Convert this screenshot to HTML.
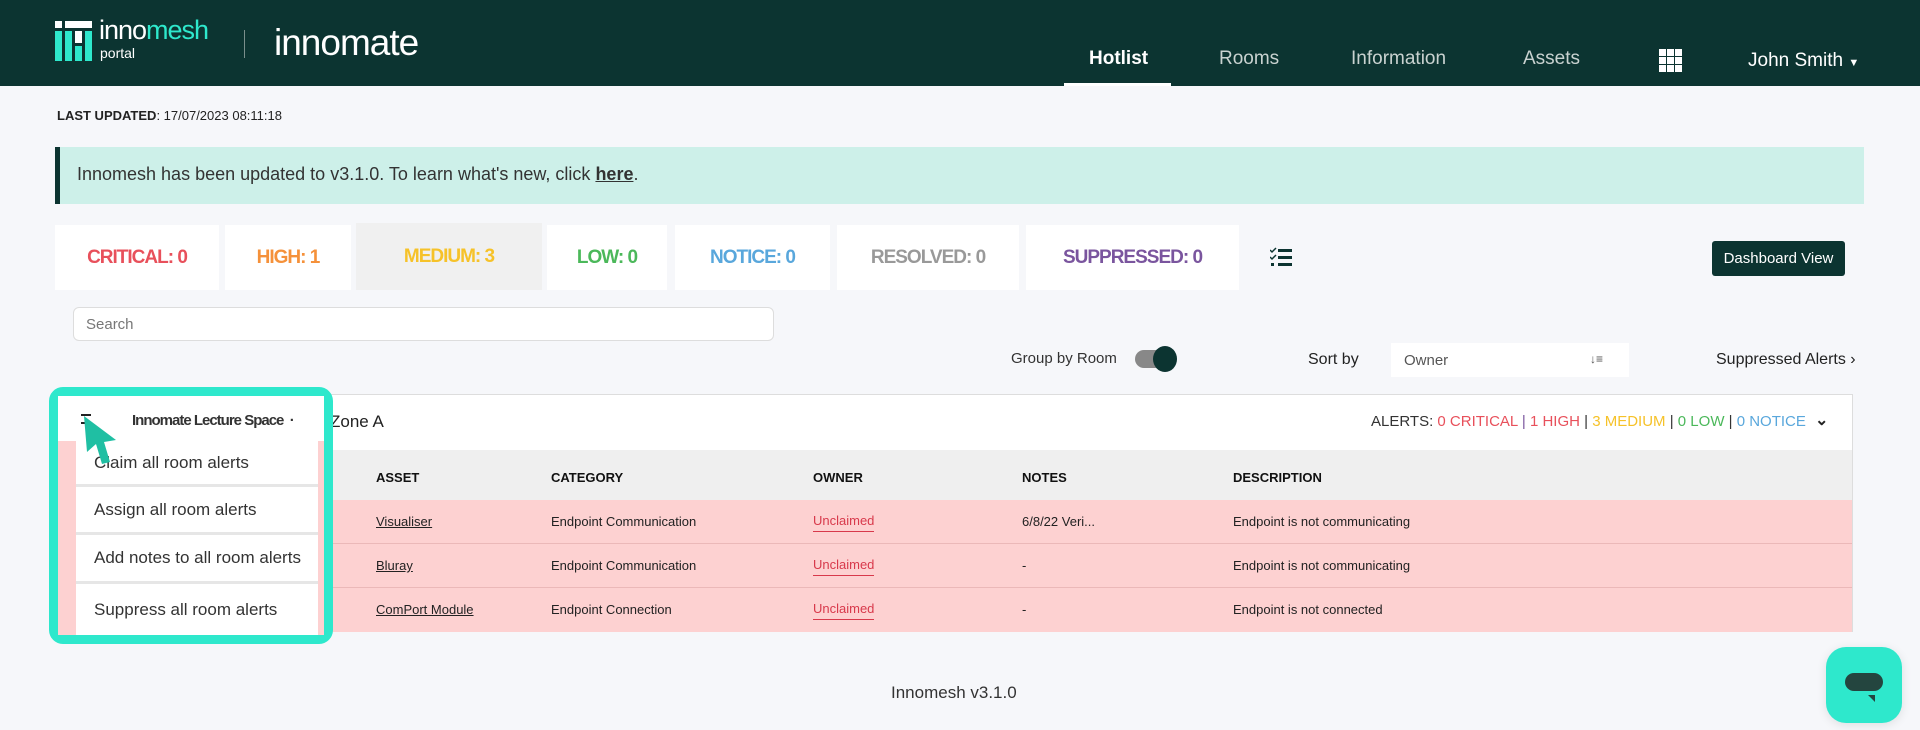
<!DOCTYPE html>
<html><head><meta charset="utf-8"><style>
*{box-sizing:border-box;margin:0;padding:0}
body{width:1920px;height:730px;overflow:hidden;background:#f6f7fa;font-family:"Liberation Sans Narrow","Liberation Sans",sans-serif;color:#222;position:relative}
.a{position:absolute}
.hdr{left:0;top:0;width:1920px;height:86px;background:#0c3431}
.nav{top:48px;font-size:19px;color:#c9d2d0}
.card{top:225px;height:65px;background:#fff;display:flex;align-items:center;justify-content:center;font-family:"Liberation Sans",sans-serif;font-weight:bold;font-size:19px;letter-spacing:-1px}
.th{top:470px;font-size:13px;font-weight:bold;color:#111}
.td{font-size:13px;color:#222}
.u{text-decoration:underline}
.un{color:#d8394b;border-bottom:1px solid #d8394b;padding-bottom:3px}
.mi{left:76px;width:242px;background:#fff;border-bottom:3px solid #e6e6e6;font-size:17px;color:#333;padding-left:18px;display:flex;align-items:center}
</style></head><body>
<div class="a hdr"></div>
<svg class="a" style="left:55px;top:21px" width="37" height="40" viewBox="0 0 37 40"><rect x="0" y="0" width="7" height="7" fill="#fff"/><rect x="0" y="10" width="7" height="30" fill="#2ee8cc"/><rect x="10" y="0" width="27" height="7" fill="#fff"/><rect x="10" y="10" width="7" height="30" fill="#2ee8cc"/><rect x="20" y="10" width="7" height="12" fill="#fff"/><rect x="20" y="25" width="7" height="15" fill="#2ee8cc"/><rect x="30" y="10" width="7" height="30" fill="#2ee8cc"/></svg>
<div class="a" style="left:99px;top:15px;font-family:'Liberation Sans',sans-serif;font-size:27px;color:#fff;letter-spacing:-1px">inno<span style="color:#2ee8cc">mesh</span></div>
<div class="a" style="left:100px;top:45px;font-family:'Liberation Sans',sans-serif;font-size:14px;color:#fff">portal</div>
<div class="a" style="left:244px;top:30px;width:1px;height:28px;background:#7a8f8c"></div>
<div class="a" style="left:274px;top:22px;font-family:'Liberation Sans',sans-serif;font-size:37px;color:#fff;letter-spacing:-1px">innomate</div>
<div class="a nav" style="left:1089px;color:#fff;font-weight:bold">Hotlist</div>
<div class="a" style="left:1064px;top:83px;width:107px;height:3px;background:#fff"></div>
<div class="a nav" style="left:1219px">Rooms</div>
<div class="a nav" style="left:1351px">Information</div>
<div class="a nav" style="left:1523px">Assets</div>
<svg class="a" style="left:1659px;top:49px" width="24" height="24"><g fill="#fff"><rect x="0" y="0" width="7" height="7"/><rect x="8" y="0" width="7" height="7"/><rect x="16" y="0" width="7" height="7"/><rect x="0" y="8" width="7" height="7"/><rect x="8" y="8" width="7" height="7"/><rect x="16" y="8" width="7" height="7"/><rect x="0" y="16" width="7" height="7"/><rect x="8" y="16" width="7" height="7"/><rect x="16" y="16" width="7" height="7"/></g></svg>
<div class="a nav" style="left:1748px;top:50px;color:#fff">John Smith <span style="font-size:11px">▼</span></div>
<div class="a" style="left:57px;top:108px;font-size:13px"><b>LAST UPDATED</b>: 17/07/2023 08:11:18</div>
<div class="a" style="left:55px;top:147px;width:1809px;height:57px;background:#cdf0e9;border-left:5px solid #0c3431"></div>
<div class="a" style="left:77px;top:164px;font-size:18px;color:#333;font-family:'Liberation Sans',sans-serif">Innomesh has been updated to v3.1.0. To learn what's new, click <b class="u">here</b>.</div>
<div class="a card" style="left:55px;width:164px;color:#e8505b">CRITICAL: 0</div>
<div class="a card" style="left:225px;width:126px;color:#f5913a">HIGH: 1</div>
<div class="a card" style="left:356px;width:186px;background:#f0f0f0;color:#f6c229;top:223px;height:67px">MEDIUM: 3</div>
<div class="a card" style="left:547px;width:120px;color:#4bb85a">LOW: 0</div>
<div class="a card" style="left:675px;width:155px;color:#59a7dc">NOTICE: 0</div>
<div class="a card" style="left:837px;width:182px;color:#999">RESOLVED: 0</div>
<div class="a card" style="left:1026px;width:213px;color:#7a559e">SUPPRESSED: 0</div>
<svg class="a" style="left:1270px;top:247px" width="22" height="20"><g fill="#0c3431"><rect x="8" y="2" width="14" height="3"/><rect x="8" y="9" width="14" height="3"/><rect x="8" y="16" width="14" height="3"/><rect x="1" y="16" width="3" height="3"/></g><path d="M0 3l2 2 4-4M0 10l2 2 4-4" stroke="#0c3431" stroke-width="1.5" fill="none"/></svg>
<div class="a" style="left:1712px;top:241px;width:133px;height:35px;background:#0c3431;border-radius:3px;color:#fff;font-size:15px;display:flex;align-items:center;justify-content:center">Dashboard View</div>
<div class="a" style="left:73px;top:307px;width:701px;height:34px;background:#fff;border:1px solid #ddd;border-radius:6px;font-size:15px;color:#777;padding:8px 12px">Search</div>
<div class="a" style="left:1011px;top:350px;font-size:15px;color:#333">Group by Room</div>
<div class="a" style="left:1135px;top:350px;width:36px;height:18px;background:#888;border-radius:9px"></div>
<div class="a" style="left:1153px;top:346px;width:24px;height:26px;background:#0c3431;border-radius:50%"></div>
<div class="a" style="left:1308px;top:351px;font-size:16px;color:#222">Sort by</div>
<div class="a" style="left:1391px;top:343px;width:238px;height:34px;background:#fff;font-size:15px;color:#555;padding:9px 13px">Owner<span style="position:absolute;right:26px;font-size:12px">↓≡</span></div>
<div class="a" style="left:1716px;top:351px;font-size:16px;color:#222">Suppressed Alerts ›</div>
<div class="a" style="left:55px;top:394px;width:1798px;height:238px;background:#fff;border:1px solid #ddd"></div>
<div class="a" style="left:56px;top:450px;width:1796px;height:50px;background:#efefef"></div>
<div class="a" style="left:56px;top:500px;width:1796px;height:132px;background:#fdd1d1"></div>
<div class="a" style="left:56px;top:543px;width:1796px;height:1px;background:#ebb8b8"></div>
<div class="a" style="left:56px;top:587px;width:1796px;height:1px;background:#ebb8b8"></div>
<div class="a" style="left:1371px;top:413px;font-size:15px;color:#333">ALERTS: <span style="color:#e8505b">0 CRITICAL</span> <span style="color:#7a559e">|</span> <span style="color:#e8505b">1 HIGH</span> | <span style="color:#f6c229">3 MEDIUM</span> | <span style="color:#4bb85a">0 LOW</span> | <span style="color:#59a7dc">0 NOTICE</span></div>
<div class="a" style="left:1815px;top:410px;font-size:16px;font-weight:bold">⌄</div>
<div class="a" style="left:330px;top:412px;font-size:17px;color:#222">Zone A</div>
<div class="a th" style="left:376px">ASSET</div><div class="a th" style="left:551px">CATEGORY</div><div class="a th" style="left:813px">OWNER</div><div class="a th" style="left:1022px">NOTES</div><div class="a th" style="left:1233px">DESCRIPTION</div>
<div class="a td" style="left:376px;top:514px"><span class="u">Visualiser</span></div><div class="a td" style="left:551px;top:514px">Endpoint Communication</div><div class="a td" style="left:813px;top:513px"><span class="un">Unclaimed</span></div><div class="a td" style="left:1022px;top:514px">6/8/22 Veri...</div><div class="a td" style="left:1233px;top:514px">Endpoint is not communicating</div>
<div class="a td" style="left:376px;top:558px"><span class="u">Bluray</span></div><div class="a td" style="left:551px;top:558px">Endpoint Communication</div><div class="a td" style="left:813px;top:557px"><span class="un">Unclaimed</span></div><div class="a td" style="left:1022px;top:558px">-</div><div class="a td" style="left:1233px;top:558px">Endpoint is not communicating</div>
<div class="a td" style="left:376px;top:602px"><span class="u">ComPort Module</span></div><div class="a td" style="left:551px;top:602px">Endpoint Connection</div><div class="a td" style="left:813px;top:601px"><span class="un">Unclaimed</span></div><div class="a td" style="left:1022px;top:602px">-</div><div class="a td" style="left:1233px;top:602px">Endpoint is not connected</div>
<div class="a" style="left:49px;top:387px;width:284px;height:257px;border:9px solid #2ee8cc;border-radius:14px;background:transparent"></div>
<div class="a" style="left:58px;top:396px;width:266px;height:45px;background:#fff"></div>
<div class="a" style="left:132px;top:412px;font-family:'Liberation Sans',sans-serif;font-weight:bold;font-size:15px;color:#333;letter-spacing:-1px">Innomate Lecture Space &nbsp;·</div>
<div class="a" style="left:58px;top:441px;width:266px;height:194px;background:#fdd1d1"></div>
<div class="a mi" style="left:76px;top:441px;height:46px">Claim all room alerts</div>
<div class="a mi" style="top:487px;height:48px">Assign all room alerts</div>
<div class="a mi" style="top:535px;height:49px">Add notes to all room alerts</div>
<div class="a mi" style="top:584px;height:51px;border-bottom:none">Suppress all room alerts</div>
<div class="a" style="left:81px;top:414px;width:10px;height:10px;border-top:2px solid #222;border-bottom:2px solid #222"></div>
<svg class="a" style="left:84px;top:416px" width="40" height="52"><path d="M0 0L32 24 20 26 26 46 18 48 12 28 3 36Z" fill="#1fbfa3"/></svg>
<div class="a" style="left:891px;top:683px;font-size:17px;color:#333">Innomesh v3.1.0</div>
<div class="a" style="left:1826px;top:647px;width:76px;height:76px;background:#2ee8cc;border-radius:20px;box-shadow:0 2px 10px rgba(0,0,0,.1)"></div>
<div class="a" style="left:1845px;top:673px;width:38px;height:18px;background:#24453f;border-radius:9px"></div>
<svg class="a" style="left:1868px;top:695px" width="8" height="8"><path d="M0 0H7V7Z" fill="#24453f"/></svg>
</body></html>
